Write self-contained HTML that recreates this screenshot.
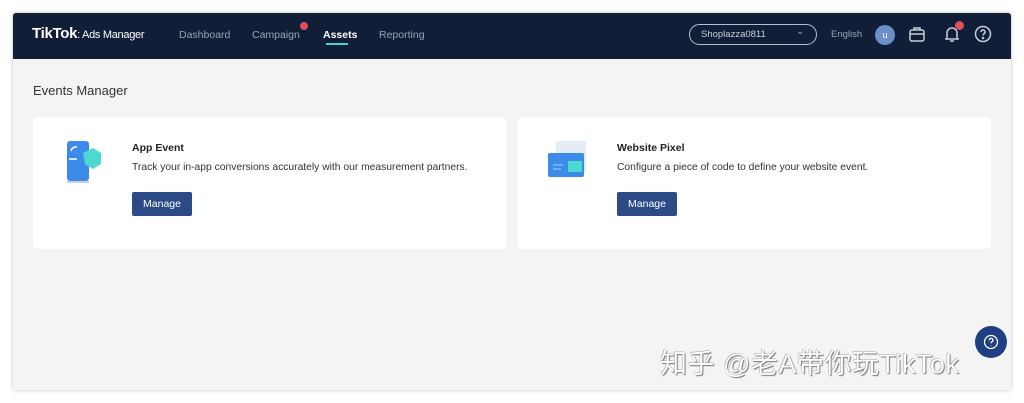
<!DOCTYPE html>
<html><head><style>
*{margin:0;padding:0;box-sizing:border-box}
body{width:1024px;height:403px;background:#fff;font-family:"Liberation Sans",sans-serif;position:relative;overflow:hidden}
.win{position:absolute;left:13px;top:13px;width:998px;height:377px;background:#f4f4f5;box-shadow:0 0 4px rgba(0,0,0,.25);border-radius:3px 3px 0 0;overflow:hidden}
.nav{position:absolute;left:0;top:0;width:998px;height:46px;background:#111e37;color:#9aa3b3;font-size:10.5px}
.nav span{position:absolute;top:16px}
.card{position:absolute;top:104px;height:132px;background:#fff;border-radius:5px}
.t{position:absolute;font-size:10.5px;color:#222;font-weight:bold}
.d{position:absolute;font-size:10.3px;color:#333}
.btn{position:absolute;width:60px;height:24px;background:#2b4a86;color:#fff;font-size:10.5px;text-align:center;line-height:24px;border-radius:2px}
</style></head><body>
<div class="win">
<div class="nav">
<span style="left:19px;top:12px;color:#fff;font-size:15px;font-weight:bold;letter-spacing:-.3px">TikTok<span style="position:static;font-size:11px;font-weight:normal">: Ads Manager</span></span>
<span style="left:166px">Dashboard</span>
<span style="left:239px">Campaign</span>
<div style="position:absolute;left:287px;top:9px;width:8px;height:8px;border-radius:50%;background:#e0505c"></div>
<span style="left:310px;color:#fff;font-weight:bold">Assets</span>
<div style="position:absolute;left:313px;top:30px;width:22px;height:2px;background:#4fd1c5"></div>
<span style="left:366px">Reporting</span>
<div style="position:absolute;left:676px;top:11px;width:128px;height:21px;border:1px solid #b7bfcc;border-radius:11px"></div>
<span style="left:688px;top:16px;font-size:9.5px;color:#c8ced8">Shoplazza0811</span>
<span style="left:783px;top:13px;font-size:10px">⌄</span>
<span style="left:818px;top:16px;font-size:9.5px">English</span>
<div style="position:absolute;left:862px;top:12px;width:20px;height:20px;border-radius:50%;background:#6b8fc9;color:#fff;font-size:9px;text-align:center;line-height:20px">u</div>
<svg style="position:absolute;left:895px;top:12px" width="18" height="18" viewBox="0 0 18 18" fill="none" stroke="#c8ced8" stroke-width="1.5"><rect x="2" y="5" width="14" height="11" rx="2"/><path d="M6 5V3h6v2M2 9h14"/></svg>
<svg style="position:absolute;left:930px;top:12px" width="18" height="18" viewBox="0 0 18 18" fill="none" stroke="#c8ced8" stroke-width="1.5"><path d="M4 14V8a5 5 0 0110 0v6zM2 14h14M7 16h4"/></svg>
<div style="position:absolute;left:942px;top:8px;width:9px;height:9px;border-radius:50%;background:#e0505c"></div>
<svg style="position:absolute;left:961px;top:12px" width="18" height="18" viewBox="0 0 18 18" fill="none" stroke="#c8ced8" stroke-width="1.5"><circle cx="9" cy="9" r="7.5"/><path d="M7 7a2 2 0 113 1.7c-.8.5-1 1-1 1.8"/><circle cx="9" cy="13" r=".5"/></svg>
</div>
<div style="position:absolute;left:20px;top:70px;font-size:13px;color:#333">Events Manager</div>
<div class="card" style="left:20px;width:473px">
<svg style="position:absolute;left:30px;top:22px" width="40" height="46"><rect x="4" y="2" width="22" height="40" rx="3" fill="#3d8be8"/><rect x="4" y="42" width="22" height="2" fill="#ccd"/><path d="M20 14l10-5 8 5v11l-8 5-8-5z" fill="#4fd8d0"/><path d="M8 12a5 5 0 016-4M6 20h8" stroke="#fff" stroke-width="1.5" fill="none"/></svg>
<div class="t" style="left:99px;top:25px">App Event</div>
<div class="d" style="left:99px;top:45px">Track your in-app conversions accurately with our measurement partners.</div>
<div class="btn" style="left:99px;top:75px">Manage</div>
</div>
<div class="card" style="left:505px;width:473px">
<svg style="position:absolute;left:28px;top:24px" width="42" height="40"><rect x="10" y="0" width="30" height="32" fill="#e4ecf6"/><rect x="2" y="12" width="36" height="24" rx="2" fill="#3d8be8"/><rect x="22" y="20" width="14" height="11" fill="#4fd8d0"/><path d="M7 24h10M7 28h8" stroke="#a9ccf5"/></svg>
<div class="t" style="left:99px;top:25px">Website Pixel</div>
<div class="d" style="left:99px;top:45px">Configure a piece of code to define your website event.</div>
<div class="btn" style="left:99px;top:75px">Manage</div>
</div>
<div style="position:absolute;left:962px;top:313px;width:32px;height:32px;border-radius:50%;background:#1f3f82"></div>
<svg style="position:absolute;left:970px;top:321px" width="16" height="16" fill="none" stroke="#fff" stroke-width="1.3"><circle cx="8" cy="8" r="6.5"/><path d="M6.3 6.3a1.8 1.8 0 112.6 1.5c-.7.4-.9.8-.9 1.5M8 11.3v.3"/></svg>
<div style="position:absolute;left:647px;top:329px;font-size:27px;letter-spacing:.5px;color:#fff;font-family:'Liberation Sans','Noto Sans CJK SC',sans-serif;text-shadow:1px 1px 1px #777,-.5px -.5px 0 #999">知乎 @老A带你玩TikTok</div>
</div>
</body></html>
